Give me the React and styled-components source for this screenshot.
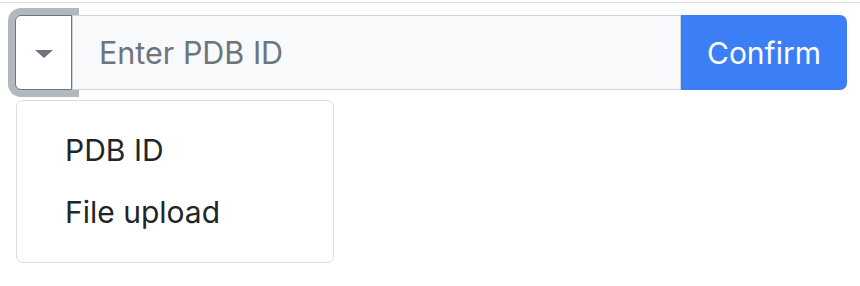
import React from 'react'
import styled, { createGlobalStyle } from 'styled-components'

const GlobalStyle = createGlobalStyle`
  body {
    margin: 0;
    background: #fff;
    font-family: Inter, "Noto Sans", sans-serif;
  }
`

const TopRule = styled.div`
  margin-top: 2px;
  height: 1px;
  background: #dedede;
`

const Page = styled.div`
  min-height: 283px;
  box-sizing: border-box;
  padding: 12px 13px 0 15px;
`

const Group = styled.div`
  display: flex;
  width: 832px;
  height: 75px;
`

const Toggle = styled.button`
  width: 57px;
  flex: none;
  display: flex;
  align-items: center;
  justify-content: center;
  padding: 0;
  background: #fff;
  border: 1px solid #6c757d;
  border-radius: 6px 0 0 6px;
  box-shadow: 0 0 0 7px #b3b8bc;
`

const Caret = styled.span`
  width: 0;
  height: 0;
  margin-top: 2px;
  border-top: 8px solid #6c757d;
  border-left: 9px solid transparent;
  border-right: 9px solid transparent;
`

const Input = styled.input`
  position: relative;
  z-index: 1;
  flex: 1;
  min-width: 0;
  margin: 0;
  padding: 0 26px;
  background: #f8f9fa;
  border: 1px solid #ced4da;
  border-radius: 0;
  font-family: inherit;
  font-size: 30.5px;
  color: #212529;
  outline: none;

  &::placeholder {
    color: #6c757d;
  }
`

const Confirm = styled.button`
  width: 166px;
  flex: none;
  background: #3b7ef6;
  color: #fff;
  border: none;
  border-radius: 0 7px 7px 0;
  font-family: inherit;
  font-size: 30px;
  padding: 0;
`

const Menu = styled.ul`
  width: 318px;
  box-sizing: border-box;
  margin: 10px 0 0 1px;
  padding: 18px 0 19px;
  list-style: none;
  background: #fff;
  border: 1px solid #dcdcdc;
  border-radius: 7px;
`

const Item = styled.li`
  height: 62px;
  line-height: 62px;
  padding: 0 48px;
  font-size: 30px;
  color: #212529;
`

export default function App() {
  return (
    <>
      <GlobalStyle />
      <TopRule />
      <Page>
        <Group>
          <Toggle aria-label="Input type">
            <Caret />
          </Toggle>
          <Input placeholder="Enter PDB ID" />
          <Confirm>Confirm</Confirm>
        </Group>
        <Menu>
          <Item>PDB ID</Item>
          <Item>File upload</Item>
        </Menu>
      </Page>
    </>
  )
}
